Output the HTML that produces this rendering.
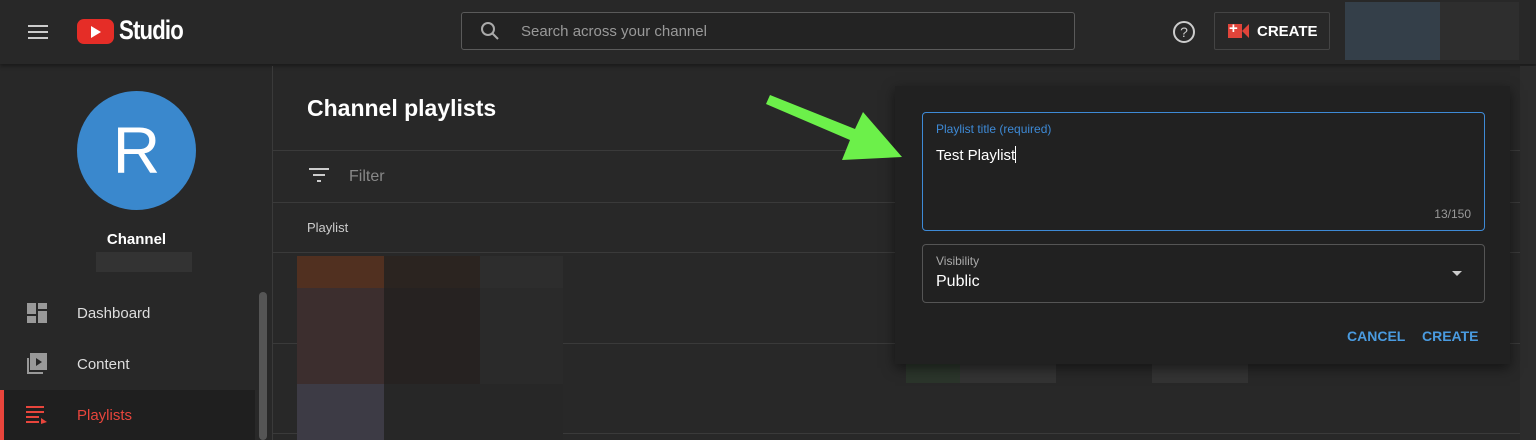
<!DOCTYPE html>
<html><head><style>
*{box-sizing:border-box;margin:0;padding:0}
body{width:1536px;height:440px;overflow:hidden;background:#282828;font-family:"Liberation Sans",sans-serif;color:#fff;position:relative}
.abs{position:absolute}
.hline{position:absolute;left:273px;right:0;height:1px;background:#3a3a3a}
</style></head><body>
<!-- header -->
<div class="abs" style="left:0;top:0;width:1536px;height:64px;background:#282828;box-shadow:0 2px 4px rgba(0,0,0,.4)"></div>
<div class="abs" style="left:28px;top:25px;width:20px;height:2px;background:#ccc;box-shadow:0 6px 0 #ccc,0 12px 0 #ccc"></div>
<div class="abs" style="left:77px;top:19px;width:37px;height:25px;background:#e52d27;border-radius:7px"></div>
<div class="abs" style="left:91px;top:26px;width:0;height:0;border-left:10px solid #fff;border-top:6px solid transparent;border-bottom:6px solid transparent"></div>
<div class="abs" style="left:119px;top:15px;font-size:27px;font-weight:bold;letter-spacing:-1px;transform:scaleX(.82);transform-origin:left">Studio</div>
<div class="abs" style="left:461px;top:12px;width:614px;height:38px;border:1px solid #5a5a5a;border-radius:3px;background:#232323"></div>
<svg class="abs" style="left:480px;top:21px" width="20" height="20"><circle cx="8" cy="8" r="6" fill="none" stroke="#aaa" stroke-width="2"/><line x1="12.5" y1="12.5" x2="18" y2="18" stroke="#aaa" stroke-width="2"/></svg>
<div class="abs" style="left:521px;top:23px;font-size:15px;color:#999">Search across your channel</div>
<svg class="abs" style="left:1172px;top:20px" width="24" height="24"><circle cx="12" cy="12" r="10" fill="none" stroke="#ccc" stroke-width="2"/><text x="12" y="17" font-size="14" fill="#ccc" text-anchor="middle" font-family="Liberation Sans">?</text></svg>
<div class="abs" style="left:1214px;top:12px;width:116px;height:38px;border:1px solid #444;border-radius:2px"></div>
<div class="abs" style="left:1228px;top:24px;width:14px;height:14px;background:#e0443a"></div>
<div class="abs" style="left:1242px;top:24px;width:0;height:0;border-right:7px solid #e0443a;border-top:7px solid transparent;border-bottom:7px solid transparent"></div>
<div class="abs" style="left:1229px;top:20px;font-size:15px;font-weight:bold;color:#fff">+</div>
<div class="abs" style="left:1257px;top:23px;font-size:15px;font-weight:bold">CREATE</div>
<div class="abs" style="left:1345px;top:2px;width:95px;height:58px;background:#343f49"></div>
<div class="abs" style="left:1440px;top:2px;width:79px;height:58px;background:#2e2e2e"></div>
<!-- sidebar -->
<div class="abs" style="left:272px;top:66px;width:1px;height:374px;background:#3a3a3a"></div>
<div class="abs" style="left:77px;top:91px;width:119px;height:119px;border-radius:50%;background:#3a88cd"></div>
<div class="abs" style="left:77px;top:112px;width:119px;text-align:center;font-size:66px;color:#fff">R</div>
<div class="abs" style="left:77px;top:231px;width:119px;text-align:center;font-size:15px;font-weight:bold">Channel</div>
<div class="abs" style="left:96px;top:252px;width:96px;height:20px;background:#333"></div>
<div class="abs" style="left:259px;top:292px;width:8px;height:148px;border-radius:4px;background:#555"></div>
<svg class="abs" style="left:27px;top:303px" width="20" height="20" fill="#999"><rect x="0" y="0" width="9" height="11"/><rect x="11" y="0" width="9" height="6"/><rect x="0" y="13" width="9" height="7"/><rect x="11" y="8" width="9" height="12"/></svg>
<div class="abs" style="left:77px;top:305px;font-size:15px;color:#ddd">Dashboard</div>
<svg class="abs" style="left:26px;top:353px" width="22" height="22" fill="none" stroke="#999" stroke-width="2"><rect x="5" y="1" width="15" height="15" fill="#999"/><path d="M2 5v15h15"/><path d="M10 5l6 4-6 4z" fill="#282828" stroke="none"/></svg>
<div class="abs" style="left:77px;top:356px;font-size:15px;color:#ddd">Content</div>
<div class="abs" style="left:0;top:390px;width:255px;height:50px;background:#1f1f1f"></div>
<div class="abs" style="left:0;top:390px;width:4px;height:50px;background:#e8453c"></div>
<svg class="abs" style="left:26px;top:406px" width="22" height="18" fill="#e8453c"><rect x="0" y="0" width="18" height="2"/><rect x="0" y="5" width="18" height="2"/><rect x="0" y="10" width="13" height="2"/><rect x="0" y="15" width="13" height="2"/><path d="M15 12l6 4-6 2z"/></svg>
<div class="abs" style="left:77px;top:407px;font-size:15px;color:#e8453c">Playlists</div>
<!-- main -->
<div class="abs" style="left:307px;top:95px;font-size:23px;font-weight:bold">Channel playlists</div>
<div class="hline" style="top:150px"></div>
<div class="hline" style="top:202px"></div>
<div class="hline" style="top:252px"></div>
<div class="hline" style="top:343px"></div>
<div class="hline" style="top:433px"></div>
<svg class="abs" style="left:309px;top:168px" width="22" height="16" fill="#ccc"><rect x="0" y="0" width="20" height="2"/><rect x="4" y="6" width="12" height="2"/><rect x="8" y="12" width="4" height="2"/></svg>
<div class="abs" style="left:349px;top:168px;font-size:16px;color:#888">Filter</div>
<div class="abs" style="left:307px;top:220px;font-size:13px;color:#ccc">Playlist</div>
<div class="abs" style="left:297px;top:256px;width:87px;height:32px;background:#513020"></div>
<div class="abs" style="left:384px;top:256px;width:96px;height:32px;background:#2b2420"></div>
<div class="abs" style="left:480px;top:256px;width:83px;height:32px;background:#2d2d2d"></div>
<div class="abs" style="left:297px;top:288px;width:87px;height:96px;background:#3c2e2e"></div>
<div class="abs" style="left:384px;top:288px;width:96px;height:96px;background:#262221"></div>
<div class="abs" style="left:480px;top:288px;width:83px;height:96px;background:#2a2a2a"></div>
<div class="abs" style="left:297px;top:384px;width:87px;height:56px;background:#3d3b45"></div>
<div class="abs" style="left:384px;top:384px;width:179px;height:56px;background:#272727"></div>
<div class="abs" style="left:906px;top:363px;width:54px;height:20px;background:#2b352b"></div>
<div class="abs" style="left:960px;top:363px;width:96px;height:20px;background:#333"></div>
<div class="abs" style="left:1152px;top:363px;width:96px;height:20px;background:#333"></div>
<div class="abs" style="left:1520px;top:66px;width:16px;height:374px;background:#2c2c2c"></div>
<!-- dialog -->
<div class="abs" style="left:895px;top:86px;width:615px;height:278px;background:#212121;box-shadow:0 4px 12px rgba(0,0,0,.5)"></div>
<div class="abs" style="left:922px;top:112px;width:563px;height:119px;border:1px solid #3e8ad6;border-radius:4px"></div>
<div class="abs" style="left:936px;top:122px;font-size:12px;color:#3e8ad6">Playlist title (required)</div>
<div class="abs" style="left:936px;top:146px;font-size:15px">Test Playlist<span style="display:inline-block;width:1px;height:17px;background:#fff;vertical-align:-3px"></span></div>
<div class="abs" style="left:1420px;top:207px;width:51px;text-align:right;font-size:12px;color:#999">13/150</div>
<div class="abs" style="left:922px;top:244px;width:563px;height:59px;border:1px solid #555;border-radius:4px"></div>
<div class="abs" style="left:936px;top:254px;font-size:12px;color:#aaa">Visibility</div>
<div class="abs" style="left:936px;top:273px;font-size:16px">Public</div>
<div class="abs" style="left:1452px;top:271px;width:0;height:0;border-top:5px solid #ccc;border-left:5px solid transparent;border-right:5px solid transparent"></div>
<div class="abs" style="left:1347px;top:328px;font-size:14px;font-weight:bold;color:#4a9be0">CANCEL</div>
<div class="abs" style="left:1422px;top:328px;font-size:14px;font-weight:bold;color:#4a9be0">CREATE</div>
<!-- arrow -->
<svg class="abs" style="left:760px;top:90px" width="150" height="80"><polygon points="10,5 95,39 103,22 142,67 82,70 90,50 6,14" fill="#6cf04a"/></svg>
</body></html>
